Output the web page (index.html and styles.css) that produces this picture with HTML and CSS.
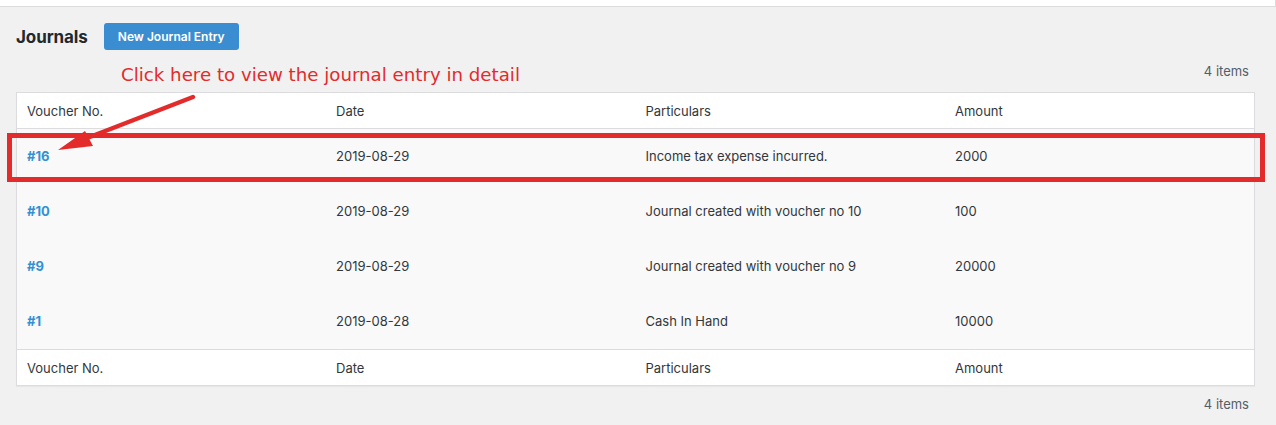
FILE: index.html
```html
<!DOCTYPE html>
<html lang="en">
<head>
<meta charset="utf-8">
<title>Journals</title>
<link rel="stylesheet" href="styles.css">
</head>
<body>
<div class="topbar"></div>
<div class="wrap">
  <div class="heading">
    <h1 class="title">Journals</h1>
    <a class="btn-primary" href="#">New Journal Entry</a>
  </div>
  <div class="tablenav">
    <span class="note">Click here to view the journal entry in detail</span>
    <span class="count">4 items</span>
  </div>
  <table class="list">
    <thead>
      <tr><th>Voucher No.</th><th>Date</th><th>Particulars</th><th>Amount</th></tr>
    </thead>
    <tbody>
      <tr><td><a class="vlink" href="#">#16</a></td><td>2019-08-29</td><td>Income tax expense incurred.</td><td>2000</td></tr>
      <tr><td><a class="vlink" href="#">#10</a></td><td>2019-08-29</td><td>Journal created with voucher no 10</td><td>100</td></tr>
      <tr><td><a class="vlink" href="#">#9</a></td><td>2019-08-29</td><td>Journal created with voucher no 9</td><td>20000</td></tr>
      <tr><td><a class="vlink" href="#">#1</a></td><td>2019-08-28</td><td>Cash In Hand</td><td>10000</td></tr>
    </tbody>
    <tfoot>
      <tr><th>Voucher No.</th><th>Date</th><th>Particulars</th><th>Amount</th></tr>
    </tfoot>
  </table>
  <div class="tablenav bottom">
    <span class="count">4 items</span>
  </div>
</div>
<svg class="annot" width="1276" height="425" viewBox="0 0 1276 425" aria-hidden="true">
  <rect x="9.5" y="135.5" width="1253" height="44" fill="none" stroke="#e32b2b" stroke-width="5"/>
  <line x1="193" y1="97" x2="82" y2="140" stroke="#e32b2b" stroke-width="4.5" stroke-linecap="round"/>
  <polygon points="58,150 85,131 93,146" fill="#e32b2b"/>
</svg>
</body>
</html>
```

FILE: styles.css
```css
html, body {
  margin: 0;
  padding: 0;
}
body {
  background: #f1f1f1;
  font-family: Inter, "Noto Sans", "Liberation Sans", sans-serif;
  font-size: 13px;
  color: #32373c;
  width: 1276px;
  height: 425px;
  overflow: hidden;
  position: relative;
}
.topbar {
  height: 6px;
  background: #fff;
  border-bottom: 1px solid #dcdcdc;
  border-right: 1px solid #dcdcdc;
}
.wrap {
  padding: 0 21px 0 16px;
}
.heading {
  display: flex;
  align-items: center;
  gap: 16px;
  margin-top: 16px;
  height: 27px;
}
.title {
  margin: 0;
  font-size: 17px;
  font-weight: 700;
  color: #23282d;
  letter-spacing: -0.1px;
}
.btn-primary {
  display: inline-flex;
  align-items: center;
  height: 27px;
  padding: 0 14px;
  background: #3a8dd0;
  border-radius: 3px;
  color: #fff;
  font-size: 12px;
  font-weight: 600;
  text-decoration: none;
}
.tablenav {
  height: 42px;
  display: flex;
  align-items: center;
  justify-content: space-between;
  padding: 0 6px 0 105px;
}
.note {
  color: #e32b2b;
  font-family: "DejaVu Sans", Verdana, sans-serif;
  font-size: 18.2px;
  margin-top: 6px;
}
.count {
  color: #555d66;
  font-size: 13px;
  margin-top: 0;
  margin-left: auto;
}
.tablenav.bottom {
  height: 38px;
  padding-left: 0;
}
.tablenav.bottom .count {
  margin-top: -3px;
}
.list {
  width: 100%;
  border-collapse: collapse;
  table-layout: fixed;
  background: #fff;
  border: 1px solid #dcdcde;
  box-shadow: 0 1px 1px rgba(0,0,0,0.04);
}
.list th {
  text-align: left;
  font-weight: 400;
  height: 35px;
  padding: 0 10px;
  color: #32373c;
}
.list thead tr {
  border-bottom: 1px solid #dcdcde;
}
.list tfoot tr {
  border-top: 1px solid #dcdcde;
}
.list tbody tr {
  background: #f9f9f9;
}
.list td {
  height: 54px;
  padding: 0 10px 1px 10px;
  color: #32373c;
}
.vlink {
  color: #3390d3;
  font-weight: 700;
  text-decoration: none;
}
.annot {
  position: absolute;
  left: 0;
  top: 0;
  pointer-events: none;
}
```
